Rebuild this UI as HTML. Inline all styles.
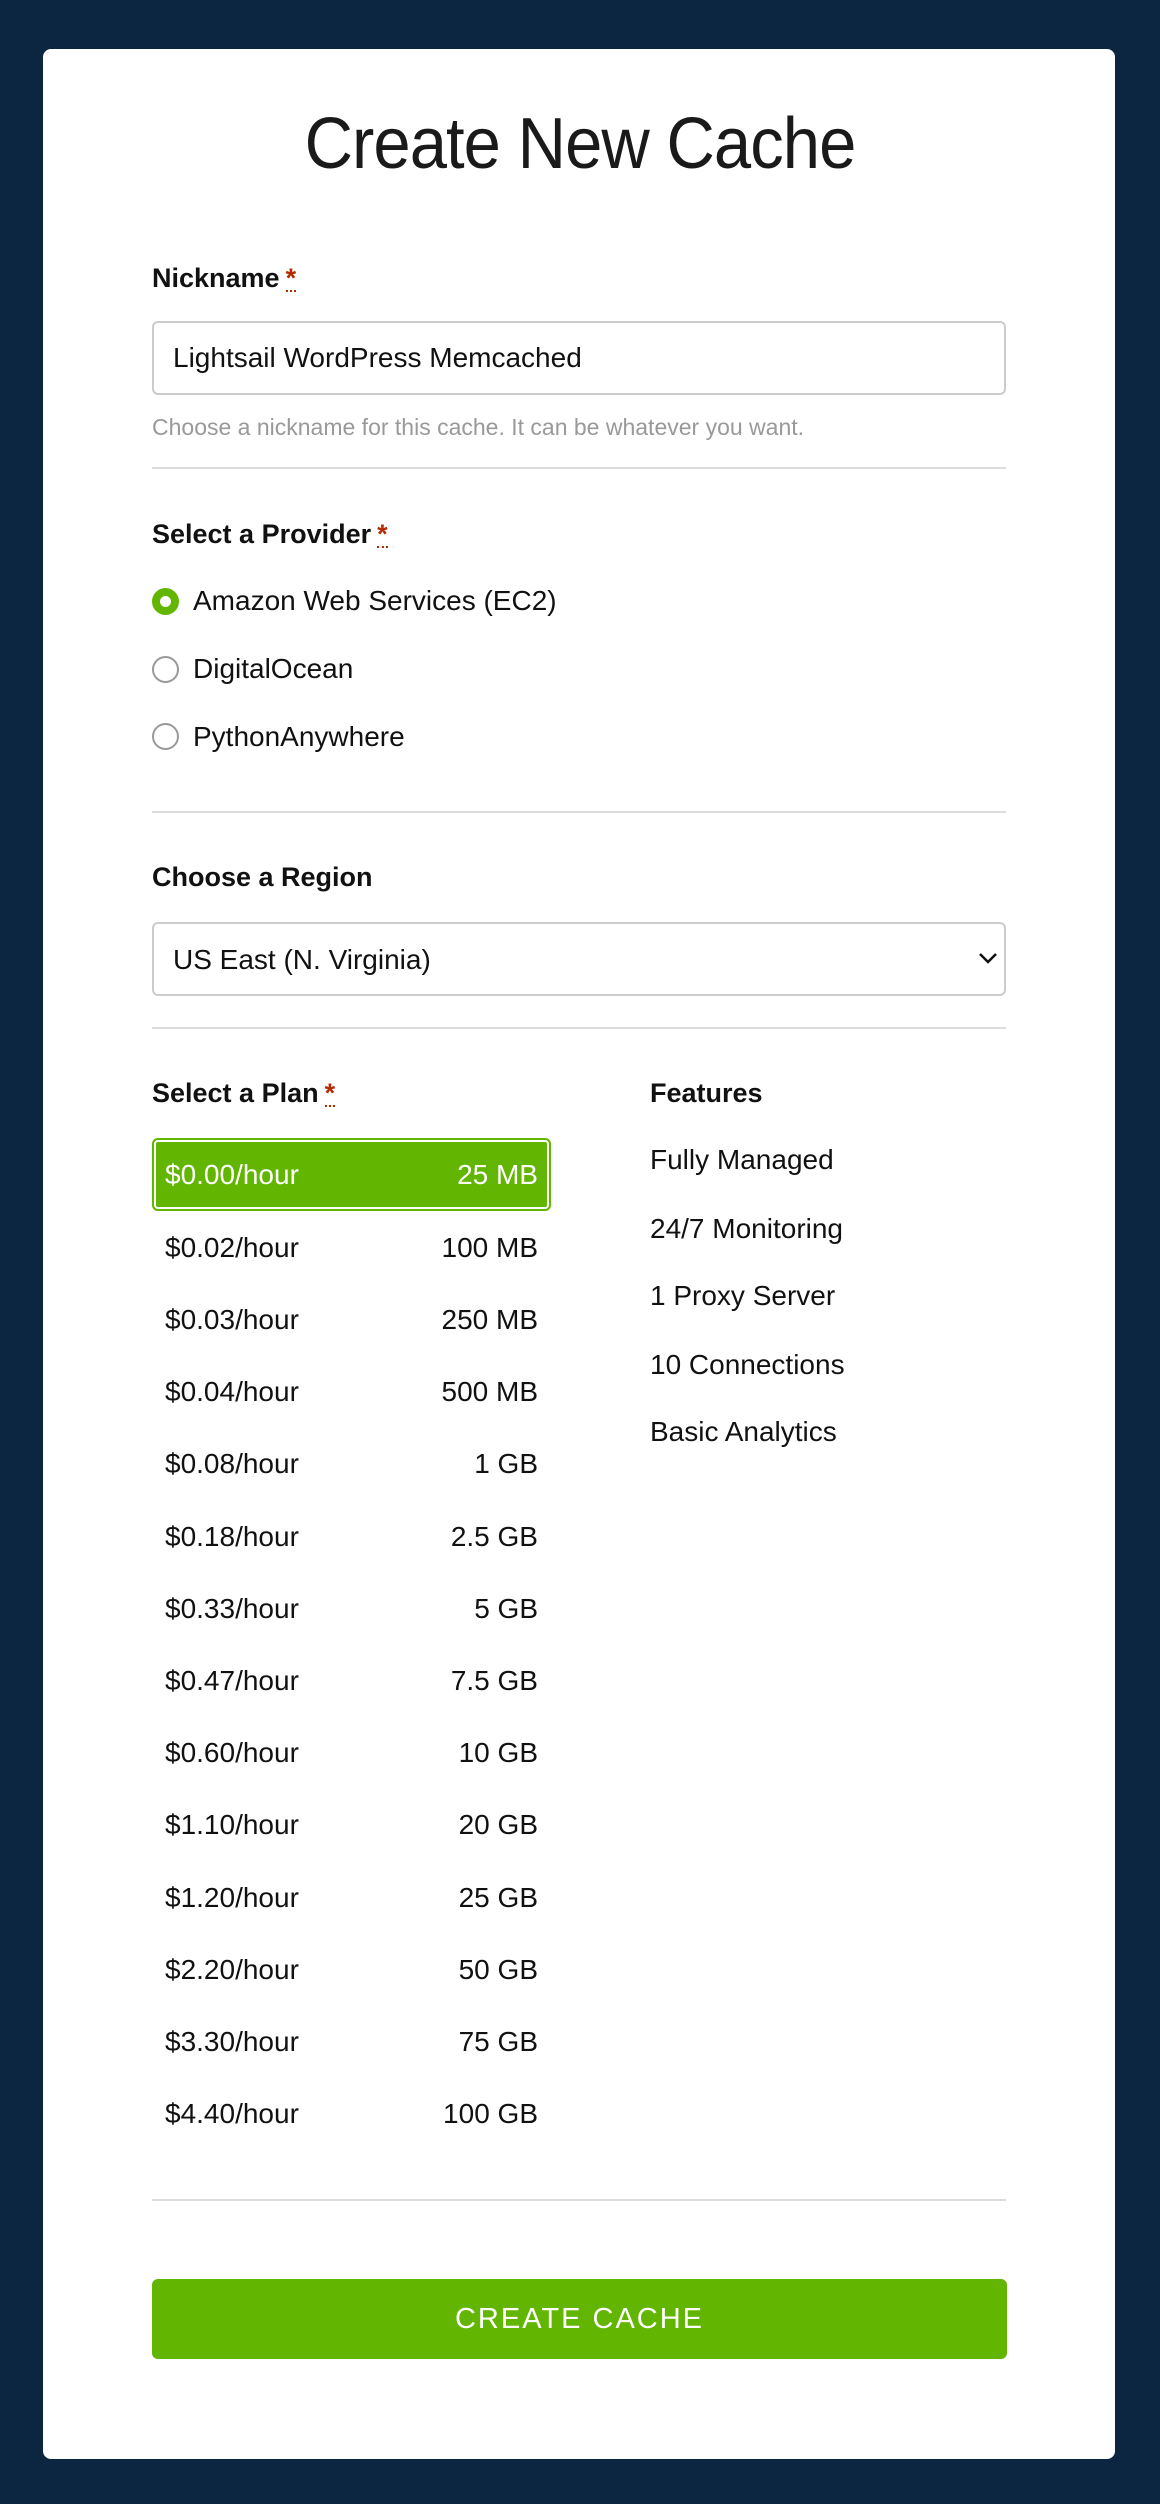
<!DOCTYPE html>
<html><head><meta charset="utf-8"><style>
*{margin:0;padding:0;box-sizing:border-box}
body{width:1160px;height:2504px;background:#0c2642;font-family:"Liberation Sans",sans-serif;color:#111;position:relative;overflow:hidden}
.card{position:absolute;left:43px;top:49px;width:1072px;height:2410px;background:#fff;border-radius:8px}
.a{position:absolute;white-space:nowrap}
.lbl{font-weight:bold;font-size:27px;line-height:34px}
.req{color:#b52a00;border-bottom:2px dotted #b52a00;margin-left:6px;display:inline-block;line-height:24px}
.hr{position:absolute;left:152px;width:854px;height:2px;background:#ddd}
.t{font-size:28px;line-height:34px}
.radio{position:absolute;left:152px;width:27px;height:27px;border-radius:50%;border:2px solid #999;background:#fff}
.price{position:absolute;left:165px;font-size:28px;line-height:34px}
.size{position:absolute;right:622px;font-size:28px;line-height:34px;text-align:right}
</style></head><body>
<div class="card"></div>
<div class="a" style="left:0;width:1160px;top:100px;text-align:center;font-size:72px;line-height:88px;letter-spacing:-1px;transform:scaleX(0.93);color:#1a1a1a">Create New Cache</div>

<div class="a lbl" style="left:152px;top:261px">Nickname<span class="req">*</span></div>
<div class="a" style="left:152px;top:321px;width:854px;height:74px;border:2px solid #ccc;border-radius:6px"></div>
<div class="a t" style="left:173px;top:341px">Lightsail WordPress Memcached</div>
<div class="a" style="left:152px;top:413px;font-size:23px;line-height:28px;color:#999">Choose a nickname for this cache. It can be whatever you want.</div>
<div class="hr" style="top:467px"></div>

<div class="a lbl" style="left:152px;top:517px">Select a Provider<span class="req">*</span></div>
<div class="radio" style="top:588px;border:8px solid #62b500"></div>
<div class="a t" style="left:193px;top:584px">Amazon Web Services (EC2)</div>
<div class="radio" style="top:656px"></div>
<div class="a t" style="left:193px;top:652px">DigitalOcean</div>
<div class="radio" style="top:723px"></div>
<div class="a t" style="left:193px;top:720px">PythonAnywhere</div>
<div class="hr" style="top:811px"></div>

<div class="a lbl" style="left:152px;top:860px">Choose a Region</div>
<div class="a" style="left:152px;top:922px;width:854px;height:74px;border:2px solid #ccc;border-radius:6px"></div>
<div class="a t" style="left:173px;top:943px">US East (N. Virginia)</div>
<svg class="a" style="left:978px;top:951px" width="20" height="14" viewBox="0 0 20 14"><path d="M2 3 L10 11 L18 3" fill="none" stroke="#111" stroke-width="2.5"/></svg>
<div class="hr" style="top:1027px"></div>

<div class="a lbl" style="left:152px;top:1076px">Select a Plan<span class="req">*</span></div>
<div class="a lbl" style="left:650px;top:1076px">Features</div>

<div class="a" style="left:152px;top:1138px;width:399px;height:73px;background:#62b500;border-radius:6px;box-shadow:inset 0 0 0 2px #62b500,inset 0 0 0 4px #fff"></div>
<div class="price" style="top:1158px;color:#fff">$0.00/hour</div><div class="size" style="top:1158px;color:#fff">25 MB</div>
<div class="price" style="top:1231px">$0.02/hour</div><div class="size" style="top:1231px">100 MB</div>
<div class="price" style="top:1303px">$0.03/hour</div><div class="size" style="top:1303px">250 MB</div>
<div class="price" style="top:1375px">$0.04/hour</div><div class="size" style="top:1375px">500 MB</div>
<div class="price" style="top:1447px">$0.08/hour</div><div class="size" style="top:1447px">1 GB</div>
<div class="price" style="top:1520px">$0.18/hour</div><div class="size" style="top:1520px">2.5 GB</div>
<div class="price" style="top:1592px">$0.33/hour</div><div class="size" style="top:1592px">5 GB</div>
<div class="price" style="top:1664px">$0.47/hour</div><div class="size" style="top:1664px">7.5 GB</div>
<div class="price" style="top:1736px">$0.60/hour</div><div class="size" style="top:1736px">10 GB</div>
<div class="price" style="top:1808px">$1.10/hour</div><div class="size" style="top:1808px">20 GB</div>
<div class="price" style="top:1881px">$1.20/hour</div><div class="size" style="top:1881px">25 GB</div>
<div class="price" style="top:1953px">$2.20/hour</div><div class="size" style="top:1953px">50 GB</div>
<div class="price" style="top:2025px">$3.30/hour</div><div class="size" style="top:2025px">75 GB</div>
<div class="price" style="top:2097px">$4.40/hour</div><div class="size" style="top:2097px">100 GB</div>

<div class="a t" style="left:650px;top:1143px">Fully Managed</div>
<div class="a t" style="left:650px;top:1212px">24/7 Monitoring</div>
<div class="a t" style="left:650px;top:1279px">1 Proxy Server</div>
<div class="a t" style="left:650px;top:1348px">10 Connections</div>
<div class="a t" style="left:650px;top:1415px">Basic Analytics</div>

<div class="hr" style="top:2199px"></div>
<div class="a" style="left:152px;top:2279px;width:855px;height:80px;background:#62b500;border-radius:6px;color:#fff;font-size:29px;line-height:80px;text-align:center;letter-spacing:2px">CREATE CACHE</div>
</body></html>
